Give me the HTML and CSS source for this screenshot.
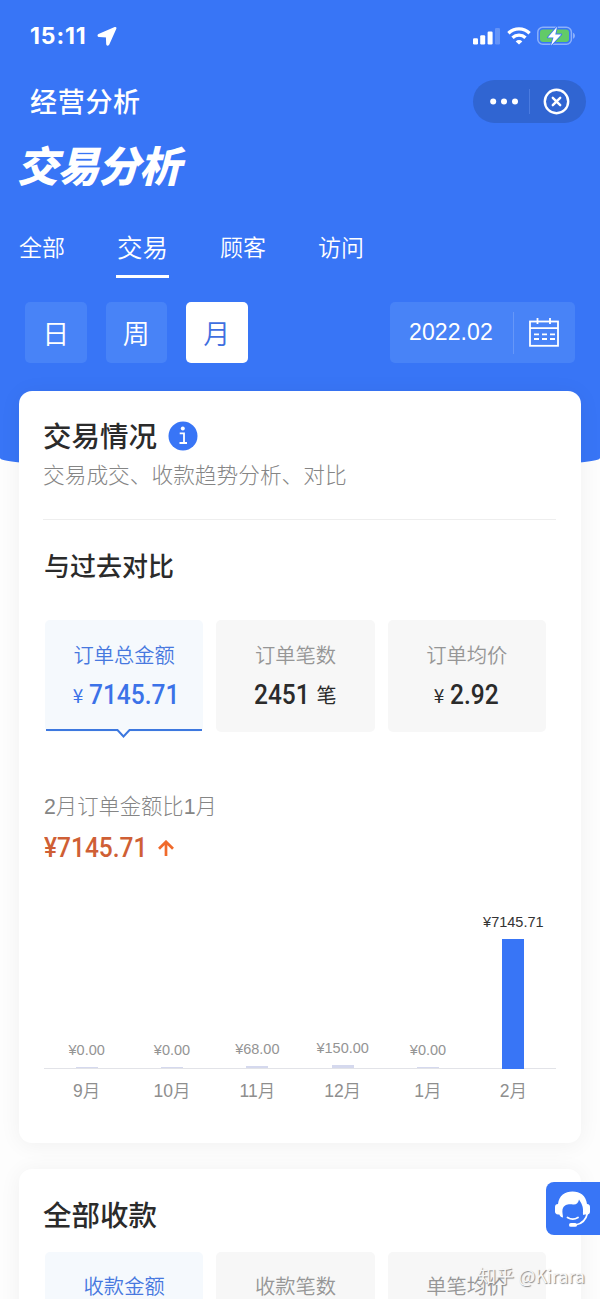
FILE: index.html
```html
<!DOCTYPE html>
<html lang="zh-CN">
<head>
<meta charset="utf-8">
<title>经营分析</title>
<link rel="stylesheet" href="styles.css">
</head>
<body>
<div class="page">
  <header class="hero">
    <div class="status">
      <span class="time">15:11</span>
      <svg class="loc" width="20" height="20" viewBox="0 0 20 20"><path d="M18 1.800 1.800 8.700c-.8.4-.6 1.500.3 1.600l7.600.3.3 7.500c.1 1 1.200 1.100 1.600.2L18.600 2.400c.2-.5-.1-.8-.6-.6z" fill="#fff" stroke="#fff" stroke-width="1.600" stroke-linejoin="round"/></svg>
      <div class="status-icons">
        <svg width="27" height="17" viewBox="0 0 27 17" fill="#fff"><rect x="0" y="10.300" width="5" height="6.200" rx="1.200"/><rect x="7.200" y="7.300" width="5" height="9.200" rx="1.200"/><rect x="14.600" y="3.600" width="5" height="12.900" rx="1.200"/><rect x="22" y="0" width="5" height="16.500" rx="1.200" opacity=".22"/></svg>
        <svg width="24" height="18" viewBox="0 0 24 18" fill="none" stroke="#fff" stroke-width="3.300"><path d="M1.400 6.200a15.300 15.300 0 0 1 21.200 0"/><path d="M5.500 10.800a9.400 9.400 0 0 1 13 0"/><path d="M12 17.500 8.700 14.400a4.700 4.700 0 0 1 6.600 0z" fill="#fff" stroke="none"/></svg>
        <svg width="39" height="20" viewBox="0 0 39 20"><rect x=".8" y="1.300" width="33.600" height="17" rx="5" fill="none" stroke="#8bb0fb" stroke-width="1.500"/><path d="M36 6.800c2.600.8 2.600 5.200 0 6z" fill="#8bb0fb"/><rect x="3" y="3.500" width="29" height="12.600" rx="3" fill="#62ca68"/><path d="M20 .8 10.800 11.400h5.700L14 19.400 24.300 8.400h-6z" fill="#fff" stroke="#3875f6" stroke-width="1.600" paint-order="stroke" stroke-linejoin="round"/></svg>
      </div>
    </div>
    <div class="navbar">
      <h1 class="nav-title">经营分析</h1>
      <div class="capsule">
        <svg class="dots" width="28" height="7" viewBox="0 0 28 7" fill="#fff"><circle cx="3.200" cy="3.500" r="3"/><circle cx="14" cy="3.500" r="3"/><circle cx="25" cy="3.500" r="3"/></svg>
        <i class="capsule-line"></i>
        <svg width="27" height="27" viewBox="0 0 27 27" fill="none" stroke="#fff" stroke-width="2.400" stroke-linecap="round"><circle cx="13.500" cy="13.500" r="11.700"/><path d="m9.800 9.800 7.400 7.400m0-7.400-7.400 7.400"/></svg>
      </div>
    </div>
    <div class="brand"><span>交易分析</span></div>
    <nav class="tabs">
      <a class="tab">全部</a><a class="tab active">交易</a><a class="tab">顾客</a><a class="tab">访问</a>
    </nav>
    <div class="filters">
      <span class="period">日</span><span class="period">周</span><span class="period on">月</span>
      <div class="date">
        <span class="date-text">2022.02</span><i class="date-line"></i>
        <svg width="30" height="29" viewBox="0 0 30 29" fill="none" stroke="#fff" stroke-width="1.800"><rect x="1" y="3.500" width="28" height="24.300"/><path d="M1 10.200h28M8.500 0v6M21 0v6" /><path d="M5 16.400h5m3 0h5m3 0h5M5 21h5m3 0h5m3 0h5"/></svg>
      </div>
    </div>
  </header>

  <section class="card main-card">
    <div class="card-head"><h2 class="card-title">交易情况</h2><svg class="info" width="30" height="30" viewBox="0 0 30 30"><circle cx="15" cy="15" r="14.500" fill="#3875f6"/><circle cx="14.800" cy="7.500" r="2" fill="#fff"/><path d="M11.700 12.300h4.300v9.700m-4.500 0h7.500" fill="none" stroke="#fff" stroke-width="1.800"/></svg></div>
    <p class="subtitle">交易成交、收款趋势分析、对比</p>
    <h3 class="section-title">与过去对比</h3>
    <div class="tiles">
      <div class="tile selected"><span class="label">订单总金额</span><span class="value"><small>¥</small><b class="din w88">7145.71</b></span>
        <svg class="pointer" width="158" height="12" viewBox="0 0 158 12"><path d="M72 2h14l-6.500 8z" fill="#fff"/><path d="M1 2h71.500l6 6.500L84.500 2H157" fill="none" stroke="#3d78df" stroke-width="2"/></svg></div>
      <div class="tile"><span class="label">订单笔数</span><span class="value"><b class="din w56">2451</b><small class="unit">笔</small></span></div>
      <div class="tile"><span class="label">订单均价</span><span class="value"><small>¥</small><b class="din w50">2.92</b></span></div>
    </div>
    <p class="compare">2月订单金额比1月</p>
    <div class="change"><b class="din w103">¥7145.71</b><svg width="16" height="16" viewBox="0 0 16 16" fill="none" stroke="#f06a2b" stroke-width="2.700"><path d="M8 16V2M1 8.800l7-7 7 7"/></svg></div>
    <div class="chart">
      <div class="col"><span class="amount">¥0.00</span><i class="bar" style="height:1.5px"></i></div>
      <div class="col"><span class="amount">¥0.00</span><i class="bar" style="height:1.5px"></i></div>
      <div class="col"><span class="amount">¥68.00</span><i class="bar" style="height:1.6px"></i></div>
      <div class="col"><span class="amount">¥150.00</span><i class="bar" style="height:3px"></i></div>
      <div class="col"><span class="amount">¥0.00</span><i class="bar" style="height:1.5px"></i></div>
      <div class="col current"><span class="amount">¥7145.71</span><i class="bar" style="height:130px"></i></div>
    </div>
    <div class="months"><span>9月</span><span>10月</span><span>11月</span><span>12月</span><span>1月</span><span>2月</span></div>
  </section>

  <section class="card next-card">
    <h2 class="card-title">全部收款</h2>
    <div class="tiles">
      <div class="tile selected"><span class="label">收款金额</span></div>
      <div class="tile"><span class="label">收款笔数</span></div>
      <div class="tile"><span class="label">单笔均价</span></div>
    </div>
  </section>

  <div class="service">
    <svg width="38" height="38" viewBox="0 0 38 38"><path d="M4 14C5 5.500 11 1.500 18.500 1.500S32 5.500 33 14c2.200.2 3 1.200 3 3v4.500c0 2-1 3-3 3h-2.500C29 26 28.800 24 29 21c.2-5-1.500-7.500-4-11.500-.5 3.500-3 5.500-6 5-4-.5-9-.5-10.500 5-.5 3 .5 5.500.5 8-1.500 0-3-1-3.700-3H4c-2-.2-3-1.200-3-3V17c0-2 1-3 3-3z" fill="#fff"/><path d="M13.500 27.500c3.500 2.200 7 2.200 10.500 0" fill="none" stroke="#fff" stroke-width="1.800" stroke-linecap="round"/><path d="M33.500 23c-1.500 7-6 11-12 12" fill="none" stroke="#fff" stroke-width="1.700"/><rect x="15" y="33" width="8" height="3.800" rx="1.900" fill="#fff"/></svg>
  </div>
  <div class="watermark">知乎 @Kirara</div>
</div>
</body>
</html>
```
FILE: styles.css
```css
* { box-sizing: border-box; margin: 0; padding: 0; }
body { font-family: "Liberation Sans", "Noto Sans CJK SC", sans-serif; color: #2b2b2b; background: #fdfdfd; }
svg { display: block; flex: none; }
i { display: block; }
.page { position: relative; width: 600px; height: 1299px; overflow: hidden; }

.hero { height: 464px; background: #3875f6; color: #fff; border-radius: 0 0 60px 60px / 0 0 6px 6px; }
.status { display: flex; align-items: center; height: 72px; padding: 0 24px 0 30px; }
.time { font: 700 23px/30px Inter, sans-serif; letter-spacing: .9px; width: 60px; white-space: nowrap; }
.loc { margin-left: 7px; }
.status-icons { display: flex; align-items: center; gap: 6.5px; margin-left: auto; }
.navbar { display: flex; align-items: center; justify-content: space-between; height: 58px; padding: 0 14px 0 30px; }
.nav-title { padding-top: 3px; font-size: 27px; line-height: 40px; font-weight: 500; letter-spacing: .7px; }
.capsule { display: flex; align-items: center; width: 113px; height: 43px; border-radius: 22px; padding-left: 17px; background: #3065d2; }
.capsule-line { width: 1px; height: 25px; margin: 0 13px 0 11px; background: #4a7be0; }
.brand { height: 74px; padding-left: 20px; font-size: 42px; line-height: 76px; font-weight: 900; }
.brand span { display: inline-block; transform: skewX(-14deg); letter-spacing: -1.2px; }
.tabs { display: flex; align-items: flex-start; height: 98px; padding: 22px 0 0 19px; }
.tab { height: 52px; line-height: 44px; font-size: 23px; font-weight: 350; white-space: nowrap; }
.tab.active { width: 53px; margin: 0 51px; padding-left: 1px; border-bottom: 3px solid #fff; font-size: 25.5px; }
.tab:last-child { margin-left: 52px; }
.filters { display: flex; gap: 19px; padding: 0 25px; }
.period { width: 61.5px; height: 60.5px; border-radius: 5px; background: #4883f7; font-size: 27px; line-height: 66px; text-align: center; font-weight: 350; }
.period.on { background: #fff; color: #3f6fe0; }
.date { display: flex; align-items: center; width: 185px; height: 61px; margin-left: auto; padding-left: 19px; border-radius: 5px; background: #4883f7; }
.date-text { width: 104px; font-size: 23px; letter-spacing: .1px; }
.date-line { width: 1px; height: 42px; margin-right: 15px; background: #6697f8; }

.card { position: relative; width: 562px; margin: 0 auto; border-radius: 13px; background: #fff; box-shadow: 0 2px 22px rgba(0, 0, 0, .055); padding: 0 25px; }
.main-card { height: 752px; margin-top: -73px; padding-top: 24px; }
.card-head { display: flex; align-items: center; gap: 11px; margin-left: -1px; }
.card-title { font-size: 28.5px; line-height: 42px; font-weight: 500; }
.card-head .card-title { padding-top: 2px; line-height: 40px; }
.subtitle { height: 63px; margin-left: -1px; padding-top: 1px; border-bottom: 1px solid #eee; font-size: 21.7px; line-height: 36px; color: #858585; font-weight: 300; white-space: nowrap; }
.section-title { margin-top: 26px; font-size: 26px; line-height: 42px; font-weight: 500; }
.tiles { display: flex; gap: 13px; margin: 32px 0 0 1px; }
.tile { position: relative; display: flex; flex-direction: column; align-items: center; width: 158.300px; height: 112px; padding-top: 21px; border-radius: 5px; background: #f7f7f7; }
.tile.selected { background: #f5f9fd; color: #3b72e8; }
.label { color: #969696; font-size: 20.300px; line-height: 30px; font-weight: 350; }
.selected .label { color: #4778df; }
.value { display: flex; align-items: center; height: 48px; }
.value small { width: 16px; font: 400 19px/30px "Noto Sans CJK SC", sans-serif; }
.value .unit { width: 20px; margin-left: 6px; font-size: 20px; }
.din { display: block; font: 500 28.5px/40px Roboto, sans-serif; white-space: nowrap; transform: scaleX(.86); transform-origin: left; }
.w88 { width: 87px; }
.w56 { width: 56px; }
.w50 { width: 50px; }
.w103 { width: 103px; }
.pointer { position: absolute; left: 0; top: 108px; }
.compare { margin-top: 55px; font-size: 21.300px; line-height: 40px; color: #858585; font-weight: 300; }
.change { display: flex; align-items: center; gap: 11px; height: 42px; color: #cf5f35; }
.chart { display: flex; height: 169px; margin-top: 31px; border-bottom: 1px solid #e2e3e8; }
.col { flex: 1; display: flex; flex-direction: column; align-items: center; justify-content: flex-end; }
.amount { margin-bottom: 7px; font-size: 14.500px; line-height: 20px; color: #949494; }
.current .amount { color: #333; }
.bar { width: 22px; background: #d5d9ee; }
.current .bar { background: #3875f6; margin-bottom: -1px; }
.months { display: flex; margin-top: 6px; font-size: 17.500px; line-height: 32px; color: #8e8e8e; text-align: center; font-weight: 350; }
.months span { flex: 1; }

.next-card { height: 230px; margin-top: 26px; padding-top: 26px; }
.next-card .card-title { margin-left: -1px; }
.next-card .tiles { margin-top: 15px; }
.next-card .tile { padding-top: 20px; }

.service { position: absolute; right: 0; top: 1182px; width: 54px; height: 53px; padding: 8px 0 0 8px; border-radius: 8px 0 0 8px; background: #3875f6; }
.watermark { position: absolute; right: 15px; top: 1262px; font: 400 18px/26px "Noto Sans CJK SC", sans-serif; color: #f7f7f7; text-shadow: 1px 1px 1px #888; white-space: nowrap; }
```
